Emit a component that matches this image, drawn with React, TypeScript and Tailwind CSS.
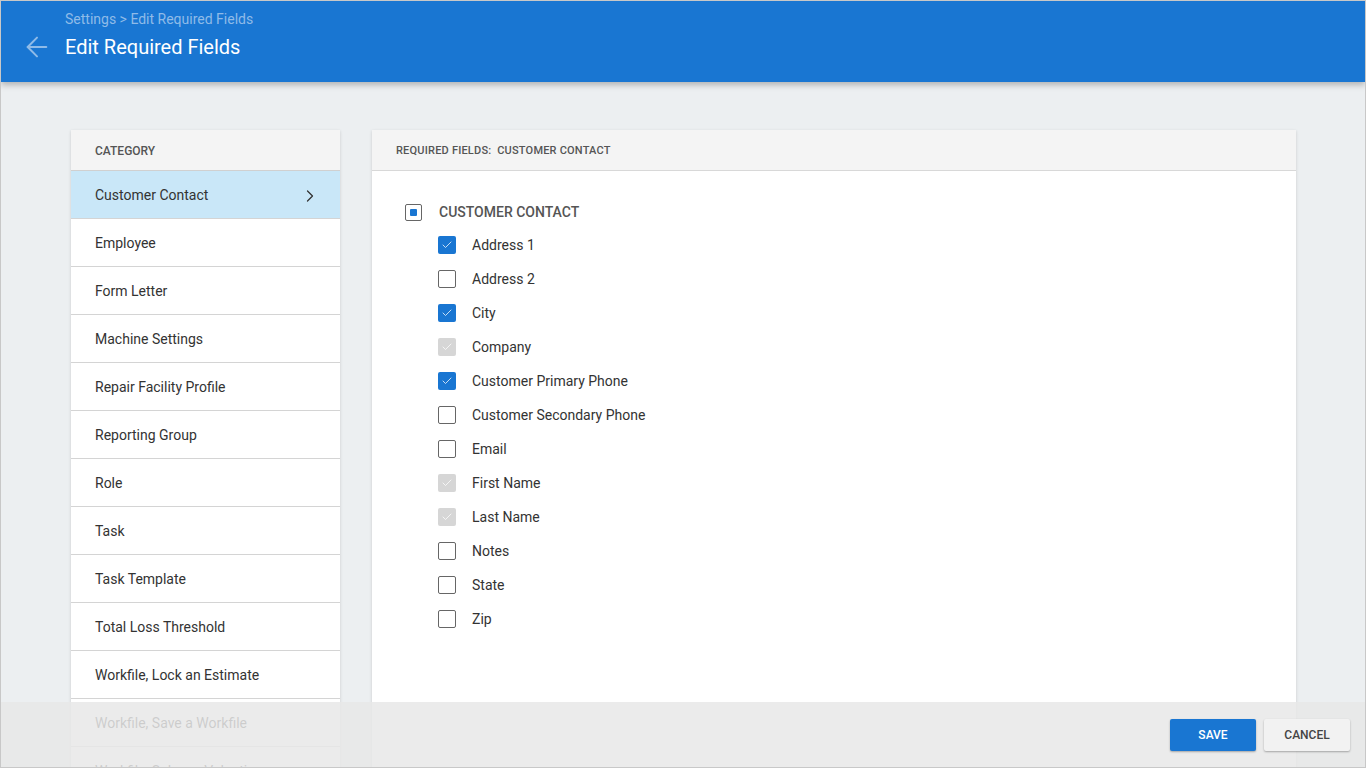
import React from 'react';
import { ArrowLeft, ChevronRight, Check } from 'lucide-react';

const categories = [
  'Customer Contact', 'Employee', 'Form Letter', 'Machine Settings', 'Repair Facility Profile',
  'Reporting Group', 'Role', 'Task', 'Task Template', 'Total Loss Threshold',
  'Workfile, Lock an Estimate', 'Workfile, Save a Workfile', 'Workfile, Salvage Valuation',
];

type State = 'on' | 'off' | 'locked';
const fields: [string, State][] = [
  ['Address 1', 'on'], ['Address 2', 'off'], ['City', 'on'], ['Company', 'locked'],
  ['Customer Primary Phone', 'on'], ['Customer Secondary Phone', 'off'], ['Email', 'off'],
  ['First Name', 'locked'], ['Last Name', 'locked'], ['Notes', 'off'], ['State', 'off'], ['Zip', 'off'],
];

function Box({ state }: { state: State }) {
  if (state === 'on')
    return <span className="w-[18px] h-[18px] rounded-[2px] bg-[#1976d2] flex items-center justify-center"><Check className="w-3 h-3 text-white" strokeWidth={1.5} /></span>;
  if (state === 'locked')
    return <span className="w-[18px] h-[18px] rounded-[2px] bg-[#d6d6d6] flex items-center justify-center"><Check className="w-3 h-3 text-white" strokeWidth={1.5} /></span>;
  return <span className="w-[18px] h-[18px] rounded-[2px] border border-[#666] bg-white" />;
}

export default function App() {
  return (
    <div className="relative w-[1366px] h-[768px] overflow-hidden bg-[#eceff1] border border-[#c8c8c8] text-[#333]" style={{ fontFamily: 'Roboto, "Liberation Sans", sans-serif' }}>
      <header className="h-[81px] bg-[#1976d2] shadow-[0_3px_6px_rgba(0,0,0,0.25)] flex items-start pl-[20px] pt-[10px] relative z-10">
        <ArrowLeft className="w-[32px] h-[32px] text-[#8fbbe8] mt-[20px]" strokeWidth={1.5} />
        <div className="ml-[12px]">
          <div className="text-[14px] text-[#8fbbe8] leading-[17px]">Settings &gt; Edit Required Fields</div>
          <div className="text-[20px] text-white mt-[7px] leading-[24px]">Edit Required Fields</div>
        </div>
      </header>

      <div className="flex gap-[32px] pl-[70px] pt-[48px]">
        <div className="w-[269px] bg-white shadow-[0_1px_3px_rgba(0,0,0,0.15)]">
          <div className="h-[41px] pt-[2px] bg-[#f4f4f4] border-b border-[#d0d0d0] flex items-center px-6 text-[12px] font-medium text-[#555]">CATEGORY</div>
          {categories.map((c, i) => (
            <div key={c} className={`h-[48px] pt-[2px] border-b border-[#d4d4d4] flex items-center justify-between px-6 text-[14px] ${i === 0 ? 'bg-[#c9e7f8]' : ''}`}>
              <span>{c}</span>
              {i === 0 && <ChevronRight className="w-5 h-5 text-[#333] -mr-1" strokeWidth={1.5} />}
            </div>
          ))}
        </div>

        <div className="w-[924px] h-[700px] bg-white shadow-[0_1px_3px_rgba(0,0,0,0.15)]">
          <div className="h-[41px] pt-[2px] bg-[#f4f4f4] border-b border-[#d8d8d8] flex items-center px-6 text-[11px] font-medium text-[#555] tracking-[0.2px]">REQUIRED FIELDS:&nbsp; CUSTOMER CONTACT</div>
          <div className="pl-[33px] pt-[31px]">
            <div className="flex items-center h-[20px]">
              <span className="w-[17px] h-[17px] rounded-[2px] border border-[#666] flex items-center justify-center"><span className="w-[7px] h-[7px] rounded-[1px] bg-[#1976d2]" /></span>
              <span className="ml-[17px] text-[14px] font-medium text-[#555]">CUSTOMER CONTACT</span>
            </div>
            <div className="pl-[33px] pt-[6px]">
              {fields.map(([f, s]) => (
                <div key={f} className="flex items-center h-[34px]">
                  <Box state={s} />
                  <span className="ml-[16px] text-[14px]">{f}</span>
                </div>
              ))}
            </div>
          </div>
        </div>
      </div>

      <div className="absolute left-0 right-0 bottom-0 h-[65px] bg-[rgba(232,232,232,0.85)] flex items-center justify-end gap-[8px] pr-[15px] z-20">
        <button className="w-[86px] h-[32px] bg-[#1976d2] text-white text-[12px] font-medium rounded-[2px] shadow-[0_1px_2px_rgba(0,0,0,0.3)]">SAVE</button>
        <button className="w-[86px] h-[32px] bg-[#f2f2f2] text-[#444] text-[12px] font-medium rounded-[2px] shadow-[0_1px_2px_rgba(0,0,0,0.3)]">CANCEL</button>
      </div>
    </div>
  );
}
